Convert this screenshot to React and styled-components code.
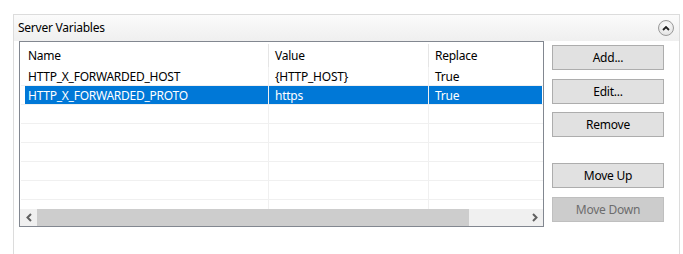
import React from "react";
import styled, { createGlobalStyle } from "styled-components";

const Global = createGlobalStyle`
  html, body { margin: 0; padding: 0; background: #ffffff; }
  body { font-family: "Noto Sans", "Open Sans", sans-serif; font-size: 12px; letter-spacing: -0.25px; color: #000; }
  #root { width: 683px; height: 254px; overflow: hidden; }
`;

const Page = styled.div`
  padding: 14px 3px 0 13px;
  height: 254px;
  box-sizing: border-box;
`;

const Panel = styled.section`
  border: 1px solid #dcdcdc;
  border-bottom: none;
  height: 240px;
  box-sizing: border-box;
  display: flex;
  flex-direction: column;
`;

const PanelHeader = styled.div`
  height: 26px;
  flex: none;
  display: flex;
  align-items: center;
  justify-content: space-between;
  padding: 0 5px 0 4px;
  background: linear-gradient(#fbfbfb, #efefef);
`;

const Title = styled.span`
  font-size: 12px;
  color: #000;
  line-height: 1;
`;

const CollapseButton = styled.button`
  width: 16px;
  height: 16px;
  padding: 0;
  border-radius: 50%;
  border: 1px solid #9a9a9a;
  background: radial-gradient(circle at 50% 35%, #ffffff, #dcdcdc);
  display: flex;
  align-items: center;
  justify-content: center;
`;

const Body = styled.div`
  display: flex;
  padding-left: 5px;
  gap: 8px;
`;

const ListBox = styled.div`
  width: 525px;
  height: 186px;
  box-sizing: border-box;
  border: 1px solid #828790;
  display: flex;
  flex-direction: column;
  background: #fff;
`;

const Table = styled.div`
  flex: 1;
  overflow: hidden;
  padding-left: 1px;
`;

const cols = "248px 160px 113px";

const HeaderRow = styled.div`
  display: grid;
  grid-template-columns: ${cols};
  height: 25px;
`;

const HeaderCell = styled.div`
  display: flex;
  align-items: center;
  padding-left: ${(p) => p.$pad}px;
  border-right: 1px solid ${(p) => (p.$last ? "transparent" : "#e5e5e5")};
  margin-top: 2px;
  color: #000;
`;

const Row = styled.div`
  display: grid;
  grid-template-columns: ${cols};
  height: 19px;
  box-sizing: border-box;
  border-bottom: 1px solid #f0f0f0;
`;

const Cell = styled.div`
  display: flex;
  align-items: center;
  padding-left: ${(p) => p.$pad}px;
  border-right: 1px solid ${(p) => (p.$last ? "transparent" : "#f0f0f0")};
  background: ${(p) => (p.$selected ? "#0078d7" : "transparent")};
  color: ${(p) => (p.$selected ? "#ffffff" : "#000")};
  margin-left: ${(p) => p.$inset || 0}px;
  white-space: nowrap;
`;

const ScrollBar = styled.div`
  height: 17px;
  flex: none;
  display: flex;
  background: #f0f0f0;
`;

const ScrollArrow = styled.div`
  width: 17px;
  display: flex;
  align-items: center;
  justify-content: center;
  flex: none;
`;

const ScrollTrack = styled.div`
  flex: 1;
  display: flex;
`;

const Thumb = styled.div`
  background: #cdcdcd;
  height: 17px;
`;

const Buttons = styled.div`
  display: flex;
  flex-direction: column;
  padding-top: 4px;
`;

const Btn = styled.button`
  width: 112px;
  height: 25px;
  box-sizing: border-box;
  margin-top: ${(p) => p.$gap}px;
  background: ${(p) => (p.disabled ? "#cccccc" : "#e1e1e1")};
  border: 1px solid ${(p) => (p.disabled ? "#bfbfbf" : "#adadad")};
  color: ${(p) => (p.disabled ? "#6d6d6d" : "#000")};
  font-family: inherit;
  font-size: 12px;
  letter-spacing: inherit;
  padding: 0;
`;

const columns = [
  { key: "name", label: "Name", pad: 7 },
  { key: "value", label: "Value", pad: 6 },
  { key: "replace", label: "Replace", pad: 6 },
];

const rows = [
  { name: "HTTP_X_FORWARDED_HOST", value: "{HTTP_HOST}", replace: "True" },
  { name: "HTTP_X_FORWARDED_PROTO", value: "https", replace: "True", selected: true },
  {}, {}, {}, {}, {}, {}, {},
];

const Chevron = ({ dir }) => (
  <svg width="8" height="9" viewBox="0 0 8 9">
    <polyline
      points={dir === "left" ? "6,1 2.5,4.5 6,8" : "2,1 5.5,4.5 2,8"}
      fill="none"
      stroke="#606060"
      strokeWidth="2"
    />
  </svg>
);

export default function App() {
  return (
    <>
      <Global />
      <Page>
        <Panel>
          <PanelHeader>
            <Title>Server Variables</Title>
            <CollapseButton aria-label="Collapse">
              <svg width="8" height="6" viewBox="0 0 8 6">
                <polyline points="1,5 4,2 7,5" fill="none" stroke="#222" strokeWidth="1.8" />
              </svg>
            </CollapseButton>
          </PanelHeader>
          <Body>
            <ListBox>
              <Table>
                <HeaderRow>
                  {columns.map((c, i) => (
                    <HeaderCell key={c.key} $pad={c.pad} $last={i === columns.length - 1}>
                      {c.label}
                    </HeaderCell>
                  ))}
                </HeaderRow>
                {rows.map((r, ri) => (
                  <Row key={ri}>
                    {columns.map((c, i) => (
                      <Cell
                        key={c.key}
                        $pad={i === 0 && r.selected ? c.pad - 4 : c.pad}
                        $inset={i === 0 && r.selected ? 4 : 0}
                        $selected={r.selected}
                        $last={i === columns.length - 1}
                      >
                        {r[c.key] || ""}
                      </Cell>
                    ))}
                  </Row>
                ))}
              </Table>
              <ScrollBar>
                <ScrollArrow><Chevron dir="left" /></ScrollArrow>
                <ScrollTrack>
                  <Thumb style={{ width: "432px" }} />
                </ScrollTrack>
                <ScrollArrow><Chevron dir="right" /></ScrollArrow>
              </ScrollBar>
            </ListBox>
            <Buttons>
              <Btn $gap={0}>Add...</Btn>
              <Btn $gap={9}>Edit...</Btn>
              <Btn $gap={8}>Remove</Btn>
              <Btn $gap={26}>Move Up</Btn>
              <Btn $gap={9} disabled>Move Down</Btn>
            </Buttons>
          </Body>
        </Panel>
      </Page>
    </>
  );
}
